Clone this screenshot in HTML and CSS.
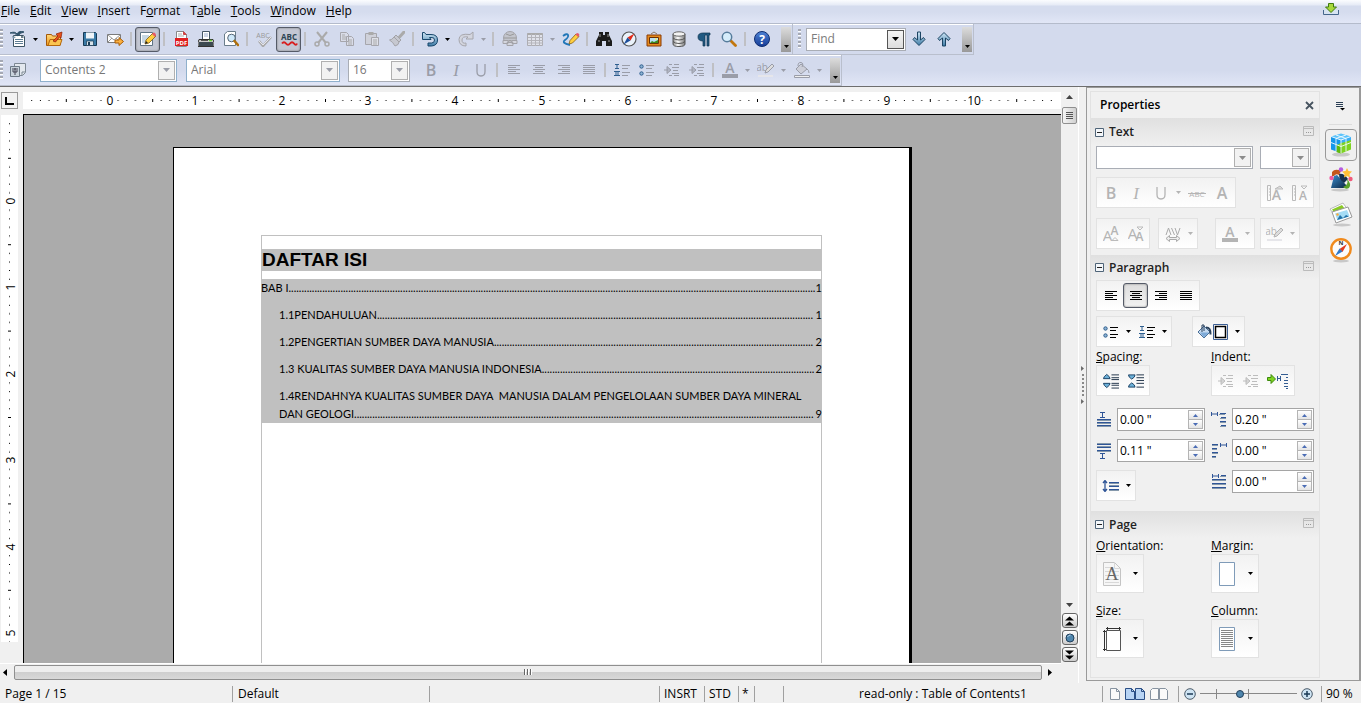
FILE: index.html
```html
<!DOCTYPE html>
<html lang="en">
<head>
<meta charset="utf-8">
<title>Document - Writer</title>
<link rel="stylesheet" href="styles.css">
<script src="leaders.js" defer></script>
</head>
<body>
<svg class="defs" aria-hidden="true">
  <defs>
    <linearGradient id="blue" x1="0" y1="0" x2="0" y2="1"><stop offset="0" stop-color="#cfe6f5"/><stop offset="1" stop-color="#3d7ba6"/></linearGradient>
    <linearGradient id="help" x1="0" y1="0" x2="0" y2="1"><stop offset="0" stop-color="#4f83d6"/><stop offset="1" stop-color="#153b95"/></linearGradient>
    <linearGradient id="folder" x1="0" y1="0" x2="0" y2="1"><stop offset="0" stop-color="#ffd97a"/><stop offset="1" stop-color="#f0991c"/></linearGradient>
    <linearGradient id="cyl" x1="0" y1="0" x2="1" y2="0"><stop offset="0" stop-color="#888"/><stop offset=".4" stop-color="#fff"/><stop offset="1" stop-color="#777"/></linearGradient>
    <linearGradient id="swirl" x1="0" y1="0" x2="1" y2="1"><stop offset="0" stop-color="#3a8fd0"/><stop offset="1" stop-color="#0c2340"/></linearGradient>
    <pattern id="inch-h" patternUnits="userSpaceOnUse" x="86.5" y="0" width="86.4" height="17">
      <path d="M8.6 8v1M17.3 8v1M25.9 8v1M34.6 8v1M43.2 7v3M51.8 8v1M60.5 8v1M69.1 8v1M77.8 8v1" stroke="#000"/>
    </pattern>
    <pattern id="inch-v" patternUnits="userSpaceOnUse" x="0" y="86.5" width="17" height="86.4">
      <path d="M8 8.6h1M8 17.3h1M8 25.9h1M8 34.6h1M7 43.2h3M8 51.8h1M8 60.5h1M8 69.1h1M8 77.8h1" stroke="#000"/>
    </pattern>
  </defs>
</svg>
<svg class="symbols" aria-hidden="true">
  <symbol id="drop" viewBox="0 0 5 3"><path d="M0 0h5L2.500 3z" fill="currentColor"/></symbol>
  <symbol id="new" viewBox="0 0 16 16"><path d="M3.500 4.500h10l1 1v10h-11z" fill="#fff" stroke="#3d5464"/><path d="M5 8.500h8M5 10.500h8M5 12.500h8" stroke="#5e7d93"/><path d="M0 2q5-2 7 1 2-4 7-2-4 .5-6 4-3-4-8-3z" fill="#31536b" stroke="#31536b"/><path d="M2 5l4 1-3 2z" fill="#7b95a8"/><path d="M11 6h2.500" stroke="#3d5464" stroke-width="1.500"/></symbol>
  <symbol id="open" viewBox="0 0 18 16"><path d="M1.500 14.500v-11h5l1 1.500h8v9z" fill="url(#folder)" stroke="#a4590a"/><path d="M3 14.500l2-6h12l-2 6z" fill="#fbc44f" stroke="#b4680c"/><path d="M8 10l5-5-2-2 6-2-1 6-1.500-1-4 5z" fill="#e8501a" stroke="#8a1f05" stroke-width=".7"/></symbol>
  <symbol id="save" viewBox="0 0 16 16"><path d="M1.500 1.500h12l1 1v12h-13z" fill="#3a7aa6" stroke="#173a55"/><path d="M4 1.500h8v6H4z" fill="#eef4f8"/><path d="M4.500 10h7v4.500h-7z" fill="#d8e3ea" stroke="#173a55" stroke-width=".7"/><path d="M6 11h2v3H6z" fill="#173a55"/></symbol>
  <symbol id="mail" viewBox="0 0 18 16"><path d="M1.500 3.500h13v8h-13z" fill="#fff" stroke="#7b7b7b"/><path d="M2 4l6 5 6-5M2 11l4-4M14 11l-4-4" fill="none" stroke="#999"/><path d="M9 9h4V6.500l4.500 4-4.500 4V12H9z" fill="#fbb040" stroke="#a65c08"/></symbol>
  <symbol id="edit" viewBox="0 0 18 16"><path d="M1.500 1.500h12v13h-12z" fill="#fff" stroke="#5f7485"/><path d="M3 5h7M3 7h6M3 9h4M3 11h3" stroke="#8fb0c8"/><path d="M6 13l1-4 7-7 3 3-7 7z" fill="#ffcf3f" stroke="#7a5a10" stroke-width=".8"/><path d="M13 3l1.500-1.500q2-.5 2.500 2.500L16 6z" fill="#e55a68"/><path d="M6 13l1-3 2 2z" fill="#222"/></symbol>
  <symbol id="pdf" viewBox="0 0 16 16"><path d="M3.500.5h7l3 3v12h-10z" fill="#fff" stroke="#888"/><path d="M10.500.5v3h3" fill="#e33" stroke="#a11" stroke-width=".6"/><path d="M5 3h4M5 5h6" stroke="#aaa"/><path d="M2 7h13v8H2z" fill="#e02020"/><text x="8.500" y="13.500" font-size="6" font-weight="700" fill="#fff" text-anchor="middle">PDF</text></symbol>
  <symbol id="print" viewBox="0 0 16 16"><path d="M4.500 8V.5h7V8" fill="#fff" stroke="#456"/><path d="M6 3h4M6 5h4" stroke="#9ac"/><path d="M1 8.500h14l1 3v4H0v-4z" fill="#ccc" stroke="#333"/><path d="M1 11h14v4H1z" fill="#3c4a52"/><path d="M3 9.500h7" stroke="#555"/><path d="M11 9.500h3" stroke="#6c3" stroke-width="1.500"/></symbol>
  <symbol id="preview" viewBox="0 0 16 16"><path d="M1.500 3l3-2.500h8v14h-11z" fill="#fff" stroke="#6a7d8b"/><circle cx="8.500" cy="7" r="3.800" fill="#cfe9fa" stroke="#567"/><path d="M11.500 10l3.500 4" stroke="#b0700c" stroke-width="2.500" stroke-linecap="round"/></symbol>
  <symbol id="spell" viewBox="0 0 18 16"><text x="8" y="7" font-size="7" text-anchor="middle" fill="#999">ABC</text><path d="M4 10l4 5 8-9" fill="none" stroke="#aaa" stroke-width="2.500"/><path d="M4 10l4 4 8-8" fill="none" stroke="#e4e4ea" stroke-width="1"/></symbol>
  <symbol id="autospell" viewBox="0 0 18 16"><text x="9" y="8.500" font-size="8" font-weight="700" text-anchor="middle" fill="#2d4452">ABC</text><path d="M2 12.500q2-2.500 4 0t4 0 4 0 3 0" fill="none" stroke="#d81e1e" stroke-width="2"/></symbol>
  <symbol id="cut" viewBox="0 0 16 16"><path d="M3 1l9 11M13 1L4 12" stroke="#aaa" stroke-width="2"/><circle cx="3" cy="13" r="2" fill="none" stroke="#aaa" stroke-width="1.500"/><circle cx="13" cy="13" r="2" fill="none" stroke="#aaa" stroke-width="1.500"/></symbol>
  <symbol id="copy" viewBox="0 0 16 16"><path d="M1.500 1.500h6l2 2v7h-8zM7.500 5.500h5l2 2v7h-7z" fill="#d9dce8" stroke="#a6a6ac"/><path d="M3 4h3M3 6h4M3 8h4M9 9h4M9 11h4M9 13h4" stroke="#aaa"/></symbol>
  <symbol id="paste" viewBox="0 0 16 16"><path d="M1.500 2.500h11v11h-11z" fill="#cfd1da" stroke="#a6a6ac"/><path d="M4.500 1h5v3h-5z" fill="#aaa"/><path d="M7.500 6.500h7v8h-7z" fill="#dee0e8" stroke="#a6a6ac"/><path d="M9 9h4M9 11h4M9 13h4" stroke="#aaa"/></symbol>
  <symbol id="brush" viewBox="0 0 16 16"><path d="M15 1l-4.500 5" stroke="#aaa" stroke-width="3" stroke-linecap="round"/><path d="M7 4l5 5-2 2-5-5zM5 6q-2 3-4.500 3Q4 11 6 15q4-1 4-4z" fill="#c6c8d0" stroke="#a3a3a8"/></symbol>
  <symbol id="undo" viewBox="0 0 16 16"><path d="M.5 1.500h2l1.500 2h5q6.500 0 6.500 5.500t-6 6H6v-3h3.500q3 0 3-3t-3.500-2.500H7.500L9 8.500H.5z" fill="url(#blue)" stroke="#17466b"/></symbol>
  <symbol id="redo" viewBox="0 0 16 16"><path d="M15 1v7H8l2-2q-6-1-6 3t4 3v3Q1 15 1 8.500t11-5z" fill="#d3d5de" stroke="#a6a6ac"/></symbol>
  <symbol id="globe" viewBox="0 0 16 16"><circle cx="8" cy="7" r="6.500" fill="#c3c5cd" stroke="#a3a3a8"/><path d="M2 7h12M4 3q4 3 8 0M4 11q4-3 8 0" stroke="#999" fill="none"/><path d="M1 9.500h5v3H1zM10 9.500h5v3h-5zM5 11.500h6v3H5z" fill="#d4d6de" stroke="#a3a3a8"/></symbol>
  <symbol id="table" viewBox="0 0 16 16"><path d="M.5 2.500h15v12H.5z" fill="#e0e2ea" stroke="#adadb2"/><path d="M.5 3h15" stroke="#aaa" stroke-width="2"/><path d="M1 6.500h15M1 9.500h15M1 12h15M4.500 3v12M8.500 3v12M12.500 3v12" stroke="#b4b4ba"/></symbol>
  <symbol id="draw" viewBox="0 0 18 16"><path d="M1 5q4-3 5-1t-3 5 5 5" fill="none" stroke="#2277b8" stroke-width="1.800"/><path d="M7 13l1-3.500L14 3l3 2.500-6.500 6.500z" fill="#ffcf3f" stroke="#875d10" stroke-width=".8"/><path d="M13.500 3.500L15 2q2 0 2.500 2L16 6z" fill="#e55a68"/></symbol>
  <symbol id="find" viewBox="0 0 16 16"><path d="M3 1h4v3h2V1h4v3l3 6v5h-6v-5H6v5H0v-5l3-6z" fill="#1c1c1c"/><path d="M2 10h2M12 10h2M4 3v3M12 3v3" stroke="#999"/></symbol>
  <symbol id="nav" viewBox="0 0 16 16"><circle cx="8" cy="8" r="7" fill="#eaf2fa" stroke="#555" stroke-width="1.200"/><path d="M13.500 2.500L9.500 9.500 6.500 6.500z" fill="#e02a1a"/><path d="M2.500 13.500l4-7 3 3z" fill="#1f4f9a"/></symbol>
  <symbol id="gallery" viewBox="0 0 16 16"><path d="M5 3l3-2 3 2" fill="none" stroke="#876"/><path d="M1 4h14v11H1z" fill="#e58a1c" stroke="#8a3b05"/><path d="M3.500 6.500h9v6h-9z" fill="#b8e0f4" stroke="#6a3005"/><path d="M4 12l2-2 2 1 4-2v3z" fill="#3c8a1e"/><circle cx="10" cy="8" r="1" fill="#fe6"/></symbol>
  <symbol id="data" viewBox="0 0 16 16"><path d="M2 3v10q0 2.500 6 2.500t6-2.500V3z" fill="url(#cyl)" stroke="#555"/><ellipse cx="8" cy="3" rx="6" ry="2.200" fill="#f3f3f3" stroke="#666"/><path d="M2 7q2 2 6 2t6-2M2 10.500q2 2 6 2t6-2" fill="none" stroke="#555"/></symbol>
  <symbol id="pilcrow" viewBox="0 0 16 16"><path d="M14 2H7Q2 2 2 6t5 4v5h2V4h2v11h2V4h1z" fill="#215a82" stroke="#0f3350" stroke-width=".7"/></symbol>
  <symbol id="zoom" viewBox="0 0 16 16"><path d="M9.500 9.500l5 5" stroke="#c2770e" stroke-width="2.800" stroke-linecap="round"/><circle cx="6" cy="6" r="4.700" fill="#d6edfb" stroke="#567c9c" stroke-width="1.500"/></symbol>
  <symbol id="helpi" viewBox="0 0 16 16"><circle cx="8" cy="8" r="7.500" fill="url(#help)" stroke="#0f2d70"/><text x="8" y="12.500" font-size="12" font-weight="700" fill="#fff" text-anchor="middle">?</text></symbol>
  <symbol id="down" viewBox="0 0 14 16"><path d="M5.500 1h3v8l3-2.500 1.500 2L7 14.500 1 8.500l1.500-2 3 2.500z" fill="url(#blue)" stroke="#1b4463"/></symbol>
  <symbol id="up" viewBox="0 0 14 16"><path d="M5.500 15h3V7l3 2.500 1.500-2L7 1.500 1 7.500l1.500 2 3-2.500z" fill="url(#blue)" stroke="#1b4463"/></symbol>
  <symbol id="styles" viewBox="0 0 16 16"><path d="M4.500 1.500h11v9l-3 3h-8z" fill="#e3e8ee" stroke="#7d8893"/><path d="M15 10h-3v3" fill="none" stroke="#7d8893"/><path d="M.5 4.500h9v10h-9z" fill="#c9d3dc" stroke="#6d7a87"/><path d="M2 7h6M5 6v7M3 8v2h4V8" fill="none" stroke="#445"/></symbol>
  <symbol id="b" viewBox="0 0 16 16"><text class="glyph" x="8" y="14" font-size="16" font-weight="600" text-anchor="middle">B</text></symbol>
  <symbol id="i" viewBox="0 0 16 16"><text class="serif" x="8" y="14" font-size="17" font-style="italic" text-anchor="middle">I</text></symbol>
  <symbol id="u" viewBox="0 0 16 16"><path d="M4 2v7.500Q4 14 8 14t4-4.500V2" fill="none" stroke="currentColor" stroke-width="1.300"/></symbol>
  <symbol id="a" viewBox="0 0 16 16"><text class="glyph" x="8" y="14" font-size="16" font-weight="600" text-anchor="middle">A</text></symbol>
  <symbol id="strike" viewBox="0 0 18 16"><text class="glyph" x="9" y="11.500" font-size="8" text-anchor="middle">ABC</text><path d="M0 8.500h18" stroke="currentColor"/></symbol>
  <symbol id="al" viewBox="0 0 14 12"><path d="M1 1.500h12M1 3.500h8M1 5.500h12M1 7.500h8M1 9.500h12" stroke="currentColor"/></symbol>
  <symbol id="ac" viewBox="0 0 14 12"><path d="M1 1.500h12M3 3.500h8M1 5.500h12M3 7.500h8M1 9.500h12" stroke="currentColor"/></symbol>
  <symbol id="ar" viewBox="0 0 14 12"><path d="M1 1.500h12M5 3.500h8M1 5.500h12M5 7.500h8M1 9.500h12" stroke="currentColor"/></symbol>
  <symbol id="aj" viewBox="0 0 14 12"><path d="M1 1.500h12M1 3.500h12M1 5.500h12M1 7.500h12M1 9.500h12" stroke="currentColor"/></symbol>
  <symbol id="numb" viewBox="0 0 16 14"><g class="mark" fill="none"><path d="M1 1.500h4M3 1v4M1 5.500h4M0 8.500h6M2 9v4M4 9v4M0 12.500h6"/></g><path d="M8 2.500h8M8 5.500h6M8 9.500h8M8 12.500h6" stroke="currentColor"/></symbol>
  <symbol id="bull" viewBox="0 0 16 14"><g class="mark bullet"><circle cx="2.500" cy="3.500" r="1.700"/><circle cx="2.500" cy="10.500" r="1.700"/></g><path d="M7 2.500h8M7 5.500h6M7 9.500h8M7 12.500h6" stroke="currentColor"/></symbol>
  <symbol id="ind" viewBox="0 0 16 14"><path d="M5 1.500h3M10 1.500h5M8 4.500h7M9 7.500h5M8 10.500h7M5 12.500h3M10 12.500h5" stroke="currentColor"/><path d="M0 7h4M3 3.500l4 3.500-4 3.500z" stroke="currentColor" fill="currentColor" fill-opacity=".6"/></symbol>
  <symbol id="fc" viewBox="0 0 16 16"><text class="glyph" x="8" y="10.500" font-size="14" font-weight="600" text-anchor="middle">A</text><path d="M0 12h16v4H0z" fill="currentColor"/></symbol>
  <symbol id="hl" viewBox="0 0 18 16"><text class="glyph" x="5" y="9" font-size="10" text-anchor="middle">ab</text><path d="M8 11l1-3 6-6 2 2-6 6z" fill="#ddd" stroke="currentColor"/><path d="M1 13h15v2H1z" fill="#e6e6ea"/></symbol>
  <symbol id="fill" viewBox="0 0 16 16"><path d="M2 7l5-5 6 5-6 5z" fill="#ccced8" stroke="currentColor"/><path d="M4 4q0-4 3-3.500T8 5M13 7q2 1 2 4" fill="none" stroke="currentColor"/><path d="M.5 13.500h15v2H.5z" fill="#eee" stroke="currentColor"/></symbol>
  <symbol id="minus" viewBox="0 0 9 9"><path d="M.5.5h8v8h-8z" fill="#f4f7fa" stroke="#4f6478"/><path d="M2 4.500h5" stroke="#222"/></symbol>
  <symbol id="more" viewBox="0 0 11 10"><path d="M.5.5h10v9H.5zM1 2.500h9" fill="none" stroke="#bbb"/><path d="M3 6.500h1M5 6.500h1M7 6.500h1" stroke="#999"/></symbol>
  <symbol id="rulA" viewBox="0 0 16 16"><path d="M.5.5h3v15h-3zM2 4h2M2 7h2M2 10h2" fill="none" stroke="#bbb"/><text class="glyph" x="9.500" y="15" font-size="14" font-weight="600" text-anchor="middle">A</text><path d="M8 4l5-3 3 3z" fill="#ddd" stroke="#bbb"/></symbol>
  <symbol id="rulB" viewBox="0 0 16 16"><path d="M.5.5h3v15h-3zM2 4h2M2 7h2M2 10h2" fill="none" stroke="#bbb"/><text class="glyph" x="11" y="15" font-size="12" font-weight="600" text-anchor="middle">A</text><path d="M9 1h6l-3 3z" fill="none" stroke="#bbb"/></symbol>
  <symbol id="grow" viewBox="0 0 16 16"><text class="glyph" x="4.500" y="15" font-size="15" text-anchor="middle">A</text><text class="glyph" x="11.500" y="9" font-size="12" font-weight="600" text-anchor="middle">A</text><path d="M9 14.500h6l-3-3z" fill="none" stroke="#bbb"/></symbol>
  <symbol id="shrink" viewBox="0 0 16 16"><text class="glyph" x="4.500" y="13" font-size="15" text-anchor="middle">A</text><text class="glyph" x="11.500" y="15" font-size="12" font-weight="600" text-anchor="middle">A</text><path d="M9 1h6l-3 3z" fill="none" stroke="#bbb"/></symbol>
  <symbol id="space" viewBox="0 0 16 16"><path d="M1 9l2.500-7L6 9M6.500 2l3 7M10 2l2.500 7L15 2" fill="none" stroke="#aaa"/><path d="M1 12.500l3.500-3v2h7v-2l3.500 3-3.500 3v-2h-7v2z" fill="#eee" stroke="#aaa"/></symbol>
  <symbol id="bucket" viewBox="0 0 32 16"><path d="M1 8l6-6 6 6-6 6z" fill="#c5daf0" stroke="#4a6f96"/><path d="M3 8.500h9l-5 5z" fill="#7daad8"/><path d="M5 8V1h2v6" fill="none" stroke="#29415c"/><path d="M9 3.500q5 0 4.500 7" fill="none" stroke="#29415c" stroke-width="2"/><path d="M16.500.5h14v15h-14z" fill="#fff" stroke="#3b5e94"/><path d="M18.500 2.500h10v11h-10z" fill="#fff" stroke="#000" stroke-width="1.500"/></symbol>
  <symbol id="spinc" viewBox="0 0 17 16"><path d="M.5 5.500q0-2 3.500-4.500 3.500 2.500 3.500 4.500zM.5 10.500q0 2 3.500 4.500 3.500-2.500 3.500-4.500z" fill="#6cb0d8" stroke="#173f63"/><path d="M9 1.500h8M9 4.500h8M9 6.500h8M9 10.500h8M9 12.500h8M9 15.500h8" stroke="#1c2f45"/></symbol>
  <symbol id="spdec" viewBox="0 0 17 16"><path d="M.5 1.500h7Q7.500 4 4 6 .5 4 .5 1.500zM.5 14.500h7Q7.500 12 4 10 .5 12 .5 14.500z" fill="#6cb0d8" stroke="#173f63"/><path d="M9 1.500h8M9 4.500h8M9 7.500h8M9 10.500h8M9 14.500h8" stroke="#1c2f45"/></symbol>
  <symbol id="hang" viewBox="0 0 22 16"><path d="M.5 4.500h3.500v-3l4.500 4.500L4 10.500v-3H.5z" fill="#7ed321" stroke="#3d8a0e"/><path d="M10.500 3v5M10.500 5.500h3M13.500 3v5M14 1.500h7" stroke="#345d92" fill="none"/><path d="M19 4.500h2M17 7.500h4M17 10.500h4M17 13.500h4M19 15.500h2" stroke="#345d92"/></symbol>
  <symbol id="above" viewBox="0 0 16 16"><path d="M4 .5h5M6.500 1v5M4 5.500h5" stroke="#2f5597" fill="none"/><path d="M1 7.500h14M1 10.500h14M1 13.500h14" stroke="#2f5597"/><path d="M1 8.500h14M1 11.500h14M1 14.500h14" stroke="#8598ab"/></symbol>
  <symbol id="below" viewBox="0 0 16 16"><path d="M4 10.500h5M6.500 11v4M4 15.500h5" stroke="#2f5597" fill="none"/><path d="M1 1.500h14M1 4.500h14M1 7.500h14" stroke="#2f5597"/><path d="M1 .5h14M1 3.500h14M1 8.500h14" stroke="#8598ab"/></symbol>
  <symbol id="inL" viewBox="0 0 16 16"><path d="M.5 0v4M1 2h5M6.500 0v4M9 1.500h6M10 5.500h5M9 9.500h6M10 13.500h5" stroke="#2f5597"/><path d="M8 2.500h6M9 6.500h6M9 10.500h6M9 14.500h6" stroke="#8598ab"/></symbol>
  <symbol id="inR" viewBox="0 0 16 16"><path d="M9.500 0v4M10 2h5M15.500 0v4M1 1.500h6M1 5.500h5M1 9.500h6M1 13.500h4" stroke="#2f5597"/><path d="M1 2.500h6M1 6.500h5M1 10.500h6M1 14.500h4" stroke="#8598ab"/></symbol>
  <symbol id="inF" viewBox="0 0 16 16"><path d="M1.500 0v4M2 2h5M7.500 0v4M10 1.500h5M1 5.500h14M1 9.500h14M1 13.500h14" stroke="#2f5597"/><path d="M9 2.500h6M1 6.500h14M1 10.500h14M1 14.500h14" stroke="#8598ab"/></symbol>
  <symbol id="lines" viewBox="0 0 18 12"><path d="M3 1v10M1 3l2-2.500L5 3M1 9l2 2.500L5 9" fill="none" stroke="#2f5597" stroke-width="1.300"/><path d="M7 2.500h10M7 6.500h10M7 9.500h10" stroke="#2f5597"/><path d="M7 3.500h10M7 5.500h10M7 10.500h10" stroke="#8598ab"/></symbol>
  <symbol id="orient" viewBox="0 0 18 24"><path d="M.5.500h11l6 6v17h-17z" fill="#f6f6f6" stroke="#c4c4c4"/><path d="M11.500.5v6h6M2 5.500h8M2 9.500h14M2 13.500h14M2 17.500h14M2 20.500h14" fill="none" stroke="#d8d8d8"/><text x="9" y="18" font-size="18" font-family="Liberation Serif, serif" text-anchor="middle" fill="#666">A</text></symbol>
  <symbol id="margin" viewBox="0 0 16 24"><path d="M.5.5h15v23H.5z" fill="#fff" stroke="#7f9bb8"/></symbol>
  <symbol id="size" viewBox="0 0 18 24"><path d="M3.500 3.500h14v20h-14z" fill="#fff" stroke="#555"/><path d="M4.500 0v3M16.500 0v3M3 1.500h15M0 4.500h3M0 22.500h3M1.500 3v21" stroke="#333"/></symbol>
  <symbol id="column" viewBox="0 0 16 24"><path d="M.5.5h15v23H.5z" fill="#fff" stroke="#7f9bb8"/><path d="M2 3.500h12M2 5.500h12M2 7.500h12M2 9.500h12M2 11.500h12M2 13.500h12M2 15.500h12M2 17.500h12M2 19.500h12" stroke="#888"/></symbol>
  <symbol id="cubes" viewBox="0 0 24 26"><ellipse cx="12" cy="22.500" rx="9" ry="2" fill="#c8c8c8"/><path d="M2 4.500L12 1.500 22 4.500 12 8z" fill="#5cc3fa"/><path d="M2 4.500L12 8v13L2 17.500z" fill="#1597ea"/><path d="M12 8l10-3.500v6l-10 4z" fill="#3aaef5"/><path d="M8 13l4-2 4-1 6-2v9.500L12 21.500l-4-1.500z" fill="#7ed321"/><path d="M7.500 13l4.500 2v6.500L7.500 20z" fill="#5fb90d"/><path d="M2 10.500l10 4M7 6.500v13M17 6.500v13M12 8v13.500M12 14.500l10-4M7 3l10 3.500M17 3L7 6.500M2 4.500L12 8l10-3.500" stroke="#f2faff" stroke-width=".9" fill="none"/></symbol>
  <symbol id="stylist" viewBox="0 0 24 26"><ellipse cx="11" cy="23" rx="9" ry="1.500" fill="#c8c8c8"/><path d="M3 9V5q3-4 9-1l-2 4q-3-2-5 1z" fill="#c4561c"/><path d="M5 9l3-1 10 11-3 2H2z" fill="url(#swirl)"/><path d="M10 7q5-1 9 5l-4 4q-5-3-5-9z" fill="#14304e"/><path d="M14 20q6-2 4-8 5 5 2 9-3 2-6-1z" fill="#5aa02c"/><path d="M18 1l1.500 3 3.500.5-2.500 2.500.5 3.500-3-1.500-3 1.500.5-3.500L13 4.500l3.500-.5z" fill="#ffc038"/><circle cx="12" cy="2.500" r="2.200" fill="#b65be0"/><circle cx="2.500" cy="11" r="2.200" fill="#f05aa0"/><circle cx="21.500" cy="12" r="2.200" fill="#f05a7a"/></symbol>
  <symbol id="pics" viewBox="0 0 24 26"><ellipse cx="13" cy="23" rx="9" ry="1.500" fill="#c8c8c8"/><path d="M1 7l13-6 8 11-13 6z" fill="#fff" stroke="#bbb"/><path d="M3 7.500l10-4.500 3 4-9 6z" fill="#8ac926"/><path d="M3 10l16-5 4 10-16 6z" fill="#fff" stroke="#999"/><path d="M6 11.500l12-3.500 2.500 6-12 4.500z" fill="#a5dcf5"/><path d="M8 18l3-5 3 3 3-3 3 1.500z" fill="#2372a8"/><circle cx="8.500" cy="12.500" r="1.200" fill="#fa3"/></symbol>
  <symbol id="compass" viewBox="0 0 24 26"><ellipse cx="12" cy="24" rx="8" ry="1.500" fill="#c8c8c8"/><circle cx="12" cy="12" r="9.700" fill="#fbfbfb" stroke="#f08a1c" stroke-width="2.400"/><text x="12" y="8" font-size="6" font-weight="700" text-anchor="middle" fill="#333">N</text><path d="M18 7l-4.500 8-3-3z" fill="#e23b1e"/><path d="M6 19l4.500-7.500 3 3z" fill="#2f78c8"/></symbol>
  <symbol id="menu" viewBox="0 0 9 9"><path d="M0 .5h7M0 2.500h7M0 4.500h7" stroke="#2b3f55"/><path d="M4 6h5L6.500 8.500z" fill="#000"/></symbol>
  <symbol id="update" viewBox="0 0 16 12"><path d="M.5 7v4.500h15V7" fill="#d7e4f2" stroke="#45678c" /><path d="M5.500.5h5v3.500h3L8 9.500 2.500 4h3z" fill="#a8d83c" stroke="#3f7a10"/></symbol>
  <symbol id="book1" viewBox="0 0 10 12"><path d="M.5.5h6l3 3v8h-9z" fill="#fafafa" stroke="#8793a0"/><path d="M6.500.5v3h3" fill="none" stroke="#8793a0"/></symbol>
  <symbol id="book2" viewBox="0 0 20 12"><path d="M.5.5h6l3 3v8h-9zM10.500.5h6l3 3v8h-9z" fill="#b8d4f4" stroke="#2b4f86"/><path d="M6.500.5v3h3M16.500.5v3h3" fill="none" stroke="#2b4f86"/></symbol>
  <symbol id="book3" viewBox="0 0 18 12"><path d="M.5 2.500l2-2h6v11h-8zM9.500.5h6l2 2v9h-8z" fill="#fafafa" stroke="#8793a0"/></symbol>
  <symbol id="zout" viewBox="0 0 12 12"><circle cx="6" cy="6" r="5.300" fill="#cfe4f3" stroke="#4a5b6a"/><path d="M3 6h6" stroke="#1b3a55" stroke-width="1.500"/></symbol>
  <symbol id="zin" viewBox="0 0 12 12"><circle cx="6" cy="6" r="5.300" fill="#cfe4f3" stroke="#4a5b6a"/><path d="M3 6h6M6 3v6" stroke="#1b3a55" stroke-width="1.500"/></symbol>
  <symbol id="ball" viewBox="0 0 10 10"><circle cx="5" cy="5" r="4" fill="#4f86ad" stroke="#23405c"/><path d="M2.500 4q1-2 3-2" fill="none" stroke="#b8d8ee"/></symbol>
  <symbol id="dblup" viewBox="0 0 9 10"><path d="M0 4.500L4.500.5 9 4.500zM0 9.500l4.500-4 4.500 4z" fill="#000"/></symbol>
  <symbol id="dbldn" viewBox="0 0 9 10"><path d="M0 .5h9l-4.500 4zM0 5.500h9l-4.500 4z" fill="#000"/></symbol>
  <symbol id="triu" viewBox="0 0 7 4"><path d="M0 4h7L3.500 0z" fill="currentColor"/></symbol>
  <symbol id="trid" viewBox="0 0 7 4"><path d="M0 0h7L3.500 4z" fill="currentColor"/></symbol>
  <symbol id="tril" viewBox="0 0 4 7"><path d="M4 0v7L0 3.500z" fill="currentColor"/></symbol>
  <symbol id="trir" viewBox="0 0 4 7"><path d="M0 0v7l4-3.500z" fill="currentColor"/></symbol>
</svg>

<header class="chrome">
  <nav class="menubar">
    <button><u>F</u>ile</button><button><u>E</u>dit</button><button><u>V</u>iew</button><button><u>I</u>nsert</button><button>F<u>o</u>rmat</button><button>T<u>a</u>ble</button><button><u>T</u>ools</button><button><u>W</u>indow</button><button><u>H</u>elp</button>
    <button class="update" aria-label="Update available"><svg width="16" height="12"><use href="#update"/></svg></button>
  </nav>

  <div class="toolrow">
    <div class="toolbar" role="toolbar" aria-label="Standard">
      <span class="grip"></span>
      <button class="tb" aria-label="New"><svg><use href="#new"/></svg></button><button class="dd" aria-label="New options"><svg><use href="#drop"/></svg></button>
      <button class="tb" aria-label="Open"><svg class="wide"><use href="#open"/></svg></button><button class="dd" aria-label="Open recent"><svg><use href="#drop"/></svg></button>
      <button class="tb" aria-label="Save"><svg><use href="#save"/></svg></button>
      <button class="tb" aria-label="Email"><svg class="wide"><use href="#mail"/></svg></button>
      <span class="sep"></span>
      <button class="tb on" aria-label="Edit file"><svg class="wide"><use href="#edit"/></svg></button>
      <span class="sep"></span>
      <button class="tb" aria-label="Export PDF"><svg><use href="#pdf"/></svg></button>
      <button class="tb" aria-label="Print"><svg><use href="#print"/></svg></button>
      <button class="tb" aria-label="Page preview"><svg><use href="#preview"/></svg></button>
      <span class="sep"></span>
      <button class="tb" aria-label="Spelling" disabled><svg class="wide"><use href="#spell"/></svg></button>
      <button class="tb on" aria-label="Auto spellcheck"><svg class="wide"><use href="#autospell"/></svg></button>
      <span class="sep"></span>
      <button class="tb" aria-label="Cut" disabled><svg><use href="#cut"/></svg></button>
      <button class="tb" aria-label="Copy" disabled><svg><use href="#copy"/></svg></button>
      <button class="tb" aria-label="Paste" disabled><svg><use href="#paste"/></svg></button>
      <button class="tb" aria-label="Format paintbrush" disabled><svg><use href="#brush"/></svg></button>
      <span class="sep"></span>
      <button class="tb" aria-label="Undo"><svg><use href="#undo"/></svg></button><button class="dd" aria-label="Undo list"><svg><use href="#drop"/></svg></button>
      <button class="tb" aria-label="Redo" disabled><svg><use href="#redo"/></svg></button><button class="dd" aria-label="Redo list" disabled><svg><use href="#drop"/></svg></button>
      <span class="sep"></span>
      <button class="tb" aria-label="Hyperlink" disabled><svg><use href="#globe"/></svg></button>
      <button class="tb" aria-label="Table" disabled><svg><use href="#table"/></svg></button><button class="dd" aria-label="Table size" disabled><svg><use href="#drop"/></svg></button>
      <button class="tb" aria-label="Show draw functions"><svg class="wide"><use href="#draw"/></svg></button>
      <span class="sep"></span>
      <button class="tb" aria-label="Find and replace"><svg><use href="#find"/></svg></button>
      <button class="tb" aria-label="Navigator"><svg><use href="#nav"/></svg></button>
      <button class="tb" aria-label="Gallery"><svg><use href="#gallery"/></svg></button>
      <button class="tb" aria-label="Data sources"><svg><use href="#data"/></svg></button>
      <button class="tb" aria-label="Nonprinting characters"><svg><use href="#pilcrow"/></svg></button>
      <button class="tb" aria-label="Zoom"><svg><use href="#zoom"/></svg></button>
      <span class="sep"></span>
      <button class="tb" aria-label="Help"><svg><use href="#helpi"/></svg></button>
      <button class="more" aria-label="More standard tools"><svg><use href="#drop"/></svg></button>
    </div>
    <div class="toolbar" role="toolbar" aria-label="Find">
      <span class="grip"></span>
      <div class="combo find"><input type="text" placeholder="Find" aria-label="Find"><button class="arrow dark" aria-label="Find history"><svg><use href="#trid"/></svg></button></div>
      <button class="tb" aria-label="Find next"><svg><use href="#down"/></svg></button>
      <button class="tb" aria-label="Find previous"><svg><use href="#up"/></svg></button>
      <button class="more" aria-label="More find tools"><svg><use href="#drop"/></svg></button>
    </div>
  </div>

  <div class="toolrow">
    <div class="toolbar" role="toolbar" aria-label="Formatting">
      <span class="grip"></span>
      <button class="tb" aria-label="Styles and formatting"><svg><use href="#styles"/></svg></button>
      <div class="combo style off"><input type="text" value="Contents 2" aria-label="Apply style" disabled><button class="arrow" aria-label="Style list" disabled><svg><use href="#trid"/></svg></button></div>
      <div class="combo font off"><input type="text" value="Arial" aria-label="Font name" disabled><button class="arrow" aria-label="Font list" disabled><svg><use href="#trid"/></svg></button></div>
      <div class="combo fsize off"><input type="text" value="16" aria-label="Font size" disabled><button class="arrow" aria-label="Size list" disabled><svg><use href="#trid"/></svg></button></div>
      <button class="tb" aria-label="Bold" disabled><svg><use href="#b"/></svg></button>
      <button class="tb" aria-label="Italic" disabled><svg><use href="#i"/></svg></button>
      <button class="tb" aria-label="Underline" disabled><svg><use href="#u"/></svg></button>
      <span class="sep"></span>
      <button class="tb" aria-label="Align left" disabled><svg class="al"><use href="#al"/></svg></button>
      <button class="tb" aria-label="Centered" disabled><svg class="al"><use href="#ac"/></svg></button>
      <button class="tb" aria-label="Align right" disabled><svg class="al"><use href="#ar"/></svg></button>
      <button class="tb" aria-label="Justified" disabled><svg class="al"><use href="#aj"/></svg></button>
      <span class="sep"></span>
      <button class="tb" aria-label="Numbering" disabled><svg class="li"><use href="#numb"/></svg></button>
      <button class="tb" aria-label="Bullets" disabled><svg class="li"><use href="#bull"/></svg></button>
      <button class="tb" aria-label="Decrease indent" disabled><svg class="li"><use href="#ind"/></svg></button>
      <button class="tb" aria-label="Increase indent" disabled><svg class="li"><use href="#ind"/></svg></button>
      <span class="sep"></span>
      <button class="tb" aria-label="Font color" disabled><svg><use href="#fc"/></svg></button><button class="dd" aria-label="Font color list" disabled><svg><use href="#drop"/></svg></button>
      <button class="tb" aria-label="Highlighting" disabled><svg class="wide"><use href="#hl"/></svg></button><button class="dd" aria-label="Highlighting list" disabled><svg><use href="#drop"/></svg></button>
      <button class="tb" aria-label="Background color" disabled><svg><use href="#fill"/></svg></button><button class="dd" aria-label="Background list" disabled><svg><use href="#drop"/></svg></button>
      <button class="more" aria-label="More formatting tools"><svg><use href="#drop"/></svg></button>
    </div>
  </div>
</header>

<main class="workspace">
  <section class="editor">
    <div class="hruler">
      <button class="tabstop" aria-label="Tab stop type"></button>
      <svg class="ruler-h" role="img" aria-label="Horizontal ruler">
        <rect width="100%" height="17" fill="url(#inch-h)" shape-rendering="crispEdges"/>
        <text x="87" y="13">0</text><text x="172" y="13">1</text><text x="259" y="13">2</text><text x="345" y="13">3</text><text x="432" y="13">4</text><text x="519" y="13">5</text><text x="605" y="13">6</text><text x="691" y="13">7</text><text x="778" y="13">8</text><text x="864" y="13">9</text><text x="951" y="13">10</text>
      </svg>
    </div>
    <div class="docrow">
      <div class="vruler">
        <svg class="ruler-v" role="img" aria-label="Vertical ruler">
          <rect width="17" height="100%" fill="url(#inch-v)" shape-rendering="crispEdges"/>
          <g transform="rotate(-90)"><text x="-86" y="14">0</text><text x="-172" y="14">1</text><text x="-259" y="14">2</text><text x="-345" y="14">3</text><text x="-432" y="14">4</text><text x="-518" y="14">5</text></g>
        </svg>
      </div>
      <div class="canvas">
        <article class="sheet">
          <div class="textarea">
            <h1>DAFTAR ISI</h1>
            <div class="toc">
              <p><span>BAB I</span><span class="dots"></span><span>1</span></p>
              <p class="sub"><span>1.1PENDAHULUAN</span><span class="dots"></span><span>1</span></p>
              <p class="sub"><span>1.2PENGERTIAN SUMBER DAYA MANUSIA</span><span class="dots"></span><span>2</span></p>
              <p class="sub"><span>1.3 KUALITAS SUMBER DAYA MANUSIA INDONESIA</span><span class="dots"></span><span>2</span></p>
              <p class="sub full">1.4RENDAHNYA KUALITAS SUMBER DAYA&nbsp; MANUSIA DALAM PENGELOLAAN SUMBER DAYA MINERAL</p>
              <p class="sub last"><span>DAN GEOLOGI</span><span class="dots"></span><span>9</span></p>
            </div>
          </div>
        </article>
      </div>
    </div>
    <div class="hscroll">
      <button aria-label="Scroll left"><svg width="4" height="7"><use href="#tril"/></svg></button>
      <div class="hthumb"><i></i><i></i><i></i></div>
      <button aria-label="Scroll right"><svg width="4" height="7"><use href="#trir"/></svg></button>
    </div>
  </section>
  <div class="vscroll">
    <button aria-label="Scroll up"><svg width="7" height="4"><use href="#triu"/></svg></button>
    <div class="vthumb"><i></i><i></i><i></i><i></i></div>
    <div class="track"></div>
    <button aria-label="Scroll down"><svg width="7" height="4"><use href="#trid"/></svg></button>
    <button class="nv" aria-label="Previous page"><svg width="9" height="10"><use href="#dblup"/></svg></button>
    <button class="nv" aria-label="Navigation"><svg width="10" height="10"><use href="#ball"/></svg></button>
    <button class="nv" aria-label="Next page"><svg width="9" height="10"><use href="#dbldn"/></svg></button>
  </div>
  <button class="splitter" aria-label="Toggle sidebar"><svg width="3" height="5"><use href="#trir"/></svg><i></i><svg width="3" height="5"><use href="#trir"/></svg></button>
  <aside class="sidebar">
    <div class="deck">
      <div class="deckhead"><h2>Properties</h2><button aria-label="Close"><svg width="9" height="9" viewBox="0 0 9 9"><path d="M1 1l7 7M8 1L1 8" stroke="#46535f" stroke-width="1.800"/></svg></button></div>

      <section class="panel ptext">
        <div class="phead"><svg width="9" height="9"><use href="#minus"/></svg><h3>Text</h3><button aria-label="More text options"><svg width="11" height="10"><use href="#more"/></svg></button></div>
        <div class="split fonts">
          <div class="combo grow off"><input type="text" aria-label="Font" disabled><button class="arrow" aria-label="Fonts" disabled><svg><use href="#trid"/></svg></button></div>
          <div class="combo side off"><input type="text" aria-label="Size" disabled><button class="arrow" aria-label="Sizes" disabled><svg><use href="#trid"/></svg></button></div>
        </div>
        <div class="split">
          <div class="group dim"><button class="tb" aria-label="Bold" disabled><svg><use href="#b"/></svg></button><button class="tb" aria-label="Italic" disabled><svg><use href="#i"/></svg></button><button class="tb" aria-label="Underline" disabled><svg><use href="#u"/></svg></button><button class="dd" aria-label="Underline styles" disabled><svg><use href="#drop"/></svg></button><button class="tb" aria-label="Strikethrough" disabled><svg class="wide"><use href="#strike"/></svg></button><button class="tb" aria-label="Shadow" disabled><svg><use href="#a"/></svg></button></div>
          <div class="group dim side"><button class="tb" aria-label="Superscript" disabled><svg><use href="#rulA"/></svg></button><button class="tb" aria-label="Subscript" disabled><svg><use href="#rulB"/></svg></button></div>
        </div>
        <div class="split four">
          <div class="group dim"><button class="tb" aria-label="Increase font" disabled><svg><use href="#grow"/></svg></button><button class="tb" aria-label="Reduce font" disabled><svg><use href="#shrink"/></svg></button></div>
          <div class="group dim"><button class="tb" aria-label="Character spacing" disabled><svg><use href="#space"/></svg></button><button class="dd" aria-label="Spacing list" disabled><svg><use href="#drop"/></svg></button></div>
          <div class="group dim fcolor"><button class="tb" aria-label="Font color" disabled><svg><use href="#fc"/></svg></button><button class="dd" aria-label="Color list" disabled><svg><use href="#drop"/></svg></button></div>
          <div class="group dim side"><button class="tb" aria-label="Highlighting" disabled><svg class="wide"><use href="#hl"/></svg></button><button class="dd" aria-label="Highlight list" disabled><svg><use href="#drop"/></svg></button></div>
        </div>
      </section>

      <section class="panel ppara">
        <div class="phead"><svg width="9" height="9"><use href="#minus"/></svg><h3>Paragraph</h3><button aria-label="More paragraph options"><svg width="11" height="10"><use href="#more"/></svg></button></div>
        <div class="group"><button class="tb" aria-label="Align left"><svg class="al"><use href="#al"/></svg></button><button class="tb on" aria-label="Centered"><svg class="al"><use href="#ac"/></svg></button><button class="tb" aria-label="Align right"><svg class="al"><use href="#ar"/></svg></button><button class="tb" aria-label="Justified"><svg class="al"><use href="#aj"/></svg></button></div>
        <div class="split lists">
          <div class="group"><button class="tb" aria-label="Bullets"><svg class="li"><use href="#bull"/></svg></button><button class="dd" aria-label="Bullet styles"><svg><use href="#drop"/></svg></button><button class="tb" aria-label="Numbering"><svg class="li"><use href="#numb"/></svg></button><button class="dd" aria-label="Numbering styles"><svg><use href="#drop"/></svg></button></div>
          <div class="group"><button class="tb bk" aria-label="Paragraph background"><svg><use href="#bucket"/></svg></button><button class="dd" aria-label="Background colors"><svg><use href="#drop"/></svg></button></div>
        </div>
        <div class="cols">
          <div>
            <h4><u>S</u>pacing:</h4>
            <div class="group"><button class="tb" aria-label="Increase spacing"><svg><use href="#spinc"/></svg></button><button class="tb" aria-label="Decrease spacing"><svg><use href="#spdec"/></svg></button></div>
            <div class="field"><svg><use href="#above"/></svg><div class="spin"><input type="text" value='0.00 "' aria-label="Above paragraph spacing"><span><button aria-label="Increase"><svg><use href="#triu"/></svg></button><button aria-label="Decrease"><svg><use href="#trid"/></svg></button></span></div></div>
            <div class="field"><svg><use href="#below"/></svg><div class="spin"><input type="text" value='0.11 "' aria-label="Below paragraph spacing"><span><button aria-label="Increase"><svg><use href="#triu"/></svg></button><button aria-label="Decrease"><svg><use href="#trid"/></svg></button></span></div></div>
            <div class="group ls"><button class="tb" aria-label="Line spacing"><svg class="lines"><use href="#lines"/></svg></button><button class="dd" aria-label="Line spacing list"><svg><use href="#drop"/></svg></button></div>
          </div>
          <div>
            <h4><u>I</u>ndent:</h4>
            <div class="group"><button class="tb faint" aria-label="Increase indent" disabled><svg class="li"><use href="#ind"/></svg></button><button class="tb faint" aria-label="Decrease indent" disabled><svg class="li"><use href="#ind"/></svg></button><button class="tb hg" aria-label="Hanging indent"><svg><use href="#hang"/></svg></button></div>
            <div class="field"><svg><use href="#inL"/></svg><div class="spin"><input type="text" value='0.20 "' aria-label="Before text indent"><span><button aria-label="Increase"><svg><use href="#triu"/></svg></button><button aria-label="Decrease"><svg><use href="#trid"/></svg></button></span></div></div>
            <div class="field"><svg><use href="#inR"/></svg><div class="spin"><input type="text" value='0.00 "' aria-label="After text indent"><span><button aria-label="Increase"><svg><use href="#triu"/></svg></button><button aria-label="Decrease"><svg><use href="#trid"/></svg></button></span></div></div>
            <div class="field"><svg><use href="#inF"/></svg><div class="spin"><input type="text" value='0.00 "' aria-label="First line indent"><span><button aria-label="Increase"><svg><use href="#triu"/></svg></button><button aria-label="Decrease"><svg><use href="#trid"/></svg></button></span></div></div>
          </div>
        </div>
      </section>

      <section class="panel ppage">
        <div class="phead"><svg width="9" height="9"><use href="#minus"/></svg><h3>Page</h3><button aria-label="More page options"><svg width="11" height="10"><use href="#more"/></svg></button></div>
        <div class="cols">
          <div><h4><u>O</u>rientation:</h4><button class="big" aria-label="Orientation"><svg width="18" height="24"><use href="#orient"/></svg><svg width="5" height="3"><use href="#drop"/></svg></button></div>
          <div><h4><u>M</u>argin:</h4><button class="big" aria-label="Margin"><svg width="18" height="24"><use href="#margin"/></svg><svg width="5" height="3"><use href="#drop"/></svg></button></div>
          <div><h4><u>S</u>ize:</h4><button class="big" aria-label="Size"><svg width="18" height="24"><use href="#size"/></svg><svg width="5" height="3"><use href="#drop"/></svg></button></div>
          <div><h4><u>C</u>olumn:</h4><button class="big" aria-label="Column"><svg width="18" height="24"><use href="#column"/></svg><svg width="5" height="3"><use href="#drop"/></svg></button></div>
        </div>
      </section>
    </div>
    <nav class="tabs">
      <button class="cfg" aria-label="Sidebar settings"><svg width="9" height="9"><use href="#menu"/></svg></button>
      <button class="tab cur" aria-label="Properties"><svg><use href="#cubes"/></svg></button>
      <button class="tab" aria-label="Styles"><svg><use href="#stylist"/></svg></button>
      <button class="tab" aria-label="Gallery"><svg><use href="#pics"/></svg></button>
      <button class="tab" aria-label="Navigator"><svg><use href="#compass"/></svg></button>
    </nav>
  </aside>
</main>

<footer class="status">
  <span class="s-page">Page 1 / 15</span><span class="s-style">Default</span><span class="s-lang"></span><span class="s-ins">INSRT</span><span class="s-std">STD</span><span class="s-mod">*</span><span class="s-sig"></span><span class="s-info">read-only : Table of Contents1</span>
  <span class="s-view"><button aria-label="Single page"><svg width="10" height="12"><use href="#book1"/></svg></button><button aria-label="Multiple pages"><svg width="20" height="12"><use href="#book2"/></svg></button><button aria-label="Book mode"><svg width="18" height="12"><use href="#book3"/></svg></button></span>
  <span class="s-zoom"><button aria-label="Zoom out"><svg width="12" height="12"><use href="#zout"/></svg></button><input type="range" min="0" max="100" value="41" aria-label="Zoom"><button aria-label="Zoom in"><svg width="12" height="12"><use href="#zin"/></svg></button></span>
  <span class="s-pct">90 %</span>
</footer>
</body>
</html>
```
FILE: leaders.js
```js
// Fills each table-of-contents leader with as many dots as its width holds.
function fillLeaders() {
  document.querySelectorAll('.dots').forEach(function (leader) {
    leader.textContent = '';
    var room = leader.getBoundingClientRect().width;
    var probe = document.createElement('span');
    probe.textContent = '.'.repeat(100);
    leader.appendChild(probe);
    var pitch = probe.getBoundingClientRect().width / 100;
    leader.textContent = '.'.repeat(Math.max(0, Math.floor(room / pitch)));
  });
}
fillLeaders();
window.addEventListener('resize', fillLeaders);
```
FILE: styles.css
```css
* { box-sizing: border-box; }
body {
  margin: 0;
  height: 100vh;
  display: flex;
  flex-direction: column;
  overflow: hidden;
  background: #f0f0f0;
  color: #000;
  font: 12px/16px "Open Sans", "Noto Sans", sans-serif;
}
button, input { font: inherit; color: inherit; }
button { border: 0; padding: 0; margin: 0; background: none; display: flex; align-items: center; justify-content: center; flex: none; }
input { border: 0; outline: 0; margin: 0; padding: 0 4px; min-width: 0; background: none; }
svg { display: block; flex: none; }
h1, h2, h3, h4, p { margin: 0; font-weight: 400; font-size: 12px; }
.defs { position: absolute; width: 0; height: 0; }
.symbols { display: none; }
.glyph { fill: currentColor; }
.serif { fill: currentColor; font-family: "Liberation Serif", serif; }
.mark { stroke: #2f5f8f; }
.bullet { fill: #8fb4d4; }

/* menu and toolbars */
.chrome { flex: none; border-bottom: 1px solid #6e6e6e; background: #d3daed; }
.menubar {
  display: flex;
  height: 24px;
  padding-bottom: 2px;
  border-bottom: 1px solid #b4bbcb;
  background: linear-gradient(#fbfcfe 0, #e6ebf6 5px, #d5dcee 6px, #d5dcee 12px, #e1e6f6 23px);
}
.menubar button { padding: 0 5px; }
.menubar button:first-child { padding-left: 1px; }
.menubar .update { margin-left: auto; padding: 0 22px 4px 0; }
.toolrow { display: flex; height: 31px; }
.toolrow:last-child { background: linear-gradient(#d3daed 50%, #e1e6f6); }
.toolbar { display: flex; align-items: center; border: 1px solid #b9bfcd; border-width: 0 1px 1px 0; box-shadow: inset 0 1px #fff; padding-right: 1px; }
.grip { width: 3px; height: 20px; margin-right: 2px; background: repeating-linear-gradient(#a5a9b4 0 2px, #fff 2px 3px, transparent 3px 4px); }
.toolbar + .toolbar .grip { margin: 0 5px; }
.tb { width: 25px; height: 25px; }
.tb svg { width: 16px; height: 16px; }
.tb svg.wide { width: 18px; }
.tb svg.al { width: 14px; height: 12px; }
.tb svg.li { width: 16px; height: 14px; }
.tb svg.lines { width: 18px; height: 12px; }
.tb.on { border: 1px solid #555b68; border-radius: 3px; background: #c3c7d3; box-shadow: inset 0 0 2px #777; }
.dd { width: 11px; height: 25px; }
.dd svg, .more svg { width: 5px; height: 3px; }
.toolbar :disabled { color: #9a9da8; --mark: #a0a3ad; }
.toolbar .mark { stroke: #a0a3ad; }
.sep { width: 2px; height: 14px; margin: 0 3px; background: #bfc0c4; }
.more { width: 10px; height: 25px; margin-left: 7px; align-items: flex-end; padding-bottom: 4px; background: linear-gradient(#dcdcdc, #999); }
.toolrow:last-child .more { margin-left: 5px; }
.toolbar + .toolbar .more { margin-left: 6px; }
.combo { display: flex; height: 23px; border: 1px solid #a9adb5; background: #fff; padding: 1px; }
.combo input { flex: 1; width: 0; padding: 0 3px; }
.combo.off input { color: #777; }
.arrow { width: 17px; height: 19px; border: 1px solid #b0b0b0; background: #f2f2f2; color: #8c8c8c; }
.arrow.dark { border-color: #555; color: #000; background: linear-gradient(#f4f4f4, #ddd); }
.arrow svg { width: 7px; height: 4px; }
.find { width: 100px; }
.find input::placeholder { color: #7c7c7c; opacity: 1; }
.style { width: 137px; margin: 0 9px 0 10px; }
.font { width: 154px; margin-right: 8px; }
.fsize { width: 62px; margin-right: 8px; }
.style, .font { border-color: #8fb0cc; }

/* editor */
.workspace { flex: 1; display: flex; min-height: 0; }
.editor { flex: 1; min-width: 0; display: flex; flex-direction: column; }
.hruler { display: flex; gap: 5px; padding: 5px 0 5px 1px; }
.tabstop { width: 17px; height: 17px; border: 1px solid #9a9a9a; background: #f2f2f2; }
.tabstop::before { content: ""; width: 7px; height: 6px; border: solid #000; border-width: 0 0 2px 2px; }
.ruler-h { flex: 1; height: 17px; background: #fff; }
.ruler-h text, .ruler-v text { font-size: 12px; text-anchor: middle; stroke: #fff; stroke-width: 3px; paint-order: stroke; }
.docrow { flex: 1; min-height: 0; display: flex; }
.vruler { width: 23px; padding: 1px 5px 21px 1px; display: flex; }
.ruler-v { width: 17px; height: 100%; background: #fff; }
.canvas { flex: 1; border: solid #000; border-width: 1px 0 0 1px; background: #ababab; display: flex; justify-content: center; align-items: stretch; padding-top: 32px; overflow: hidden; }
.sheet { width: 739px; flex: none; border: solid #000; border-width: 1px 3px 0 1px; background: #fff; padding: 87px 87px 0; display: flex; }
.textarea { flex: 1; min-width: 0; border: 1px solid #c0c0c0; border-bottom: 0; padding-top: 13px; }
.textarea h1 { background: #c0c0c0; font: 700 19px/22px "Liberation Sans", Arial, sans-serif; }
.toc { margin: 8px -1px 0; background: #c0c0c0; font: 11px/18px Lato, Carlito, sans-serif; }
.toc p { display: flex; padding-bottom: 9px; font-size: 11px; white-space: nowrap; }
.toc .sub { padding-left: 18px; }
.toc .full, .toc .last { padding-bottom: 0; }
.dots { flex: 1; width: 0; }
.hscroll { height: 20px; display: flex; align-items: center; padding: 0 3px 3px; border-top: 1px solid #fff; }
.hscroll button { width: 11px; height: 16px; justify-content: flex-start; }
.hscroll button:last-child { width: 16px; justify-content: center; }
.hthumb { flex: 1; height: 15px; display: flex; align-items: center; justify-content: center; gap: 1px; border: 1px solid #8f8f8f; border-radius: 2px; background: linear-gradient(#eee 45%, #cfcfcf 50%, #d8d8d8); }
.hthumb i { width: 2px; height: 6px; background: #666; border-right: 1px solid #fff; }
.vscroll { width: 17px; display: flex; flex-direction: column; align-items: center; padding-bottom: 19px; color: #444; }
.vscroll > button { width: 16px; height: 20px; }
.vthumb { width: 15px; height: 17px; display: flex; flex-direction: column; align-items: center; justify-content: center; gap: 1px; border: 1px solid #8f8f8f; border-radius: 2px; background: linear-gradient(90deg, #f4f4f4, #d0d0d0); }
.vthumb i { width: 7px; height: 1px; background: #555; }
.track { flex: 1; }
.vscroll .nv { width: 16px; height: 15px; margin-bottom: 2px; border: 1px solid #666; border-radius: 3px; background: linear-gradient(#fff, #ccc); }
.vscroll > button:nth-of-type(2) { height: 16px; }
.splitter { width: 8px; flex-direction: column; gap: 3px; border: solid #fff; border-width: 0 0 0 1px; color: #666; }
.splitter i { width: 2px; height: 22px; background: repeating-linear-gradient(#888 0 2px, transparent 2px 4px); }

/* sidebar */
.sidebar { width: 275px; display: flex; border: solid #9a9a9a; border-width: 1px 2px 1px 1px; margin-bottom: 2px; background: #f0f0f0; }
.deck { flex: 1; margin: 3px 0 2px 3px; border: 1px solid #e2e2e2; }
.deckhead { height: 26px; display: flex; align-items: center; justify-content: space-between; padding: 0 5px 0 9px; }
.deckhead h2, .phead h3 { font-weight: 600; }
.panel { padding: 0 5px; }
.ptext { height: 137px; }
.ppara { height: 256px; }
.phead { display: flex; align-items: center; gap: 5px; height: 28px; margin: 0 -5px; padding: 0 5px 0 4px; background: linear-gradient(#e0e0e0, #f0f0f0); }
.ppara .phead { height: 25px; }
.ppage .phead { height: 27px; }
.phead h3 { flex: 1; color: #222; }
.phead button { padding-bottom: 3px; }
.split { display: flex; margin-bottom: 10px; }
.side { margin-left: auto; }
.fonts { margin-bottom: 8px; }
.fonts .grow { width: 157px; }
.fonts .side { width: 51px; margin-left: 7px; }
.split .group.side { margin-left: 24px; }
.split.four .group.side { margin-left: 5px; }
.four .group + .group { margin-left: 8px; }
.four .group.fcolor { margin-left: 17px; }
.group { display: flex; align-items: center; width: max-content; height: 31px; padding: 0 1px; border: 1px solid #e2e2e2; background: linear-gradient(#f2f2f2, #fff); }
.group.dim { color: #b4b4b4; }
.faint { color: #bdbdbd; }
.ppara > .group { margin-bottom: 5px; }
.lists { gap: 20px; margin-bottom: 2px; }
.bk { width: 38px; }
.tb.bk svg { width: 32px; }
.hg { width: 30px; }
.tb.hg svg { width: 22px; }
.group .on { background: linear-gradient(#ddd, #f2f2f2); }
.cols { display: grid; grid-template-columns: 115px 1fr; }
.cols h4 { height: 16px; }
.field { display: flex; align-items: center; gap: 5px; height: 23px; margin-bottom: 8px; }
.group + .field { margin-top: 12px; }
.field > svg { width: 16px; height: 16px; }
.spin { display: flex; flex: none; width: 88px; height: 23px; padding: 1px; border: 1px solid #a5a5a5; background: #fff; }
.cols > div:last-child .spin { width: 82px; }
.spin input { flex: 1; width: 0; padding: 0 1px; }
.spin span { display: flex; flex-direction: column; width: 15px; border: 1px solid #b4b4b4; color: #4a6cb5; }
.spin button { flex: 1; background: linear-gradient(#fff, #e4e4e4); }
.spin button + button { border-top: 1px solid #b4b4b4; }
.spin svg { width: 5px; height: 3px; }
.ls { margin-top: 6px; }
.ppage .cols { row-gap: 10px; }
.big { width: 48px; height: 39px; gap: 12px; border: 1px solid #e2e2e2; background: linear-gradient(#f2f2f2, #fff); }
.tabs { width: 39px; display: flex; flex-direction: column; align-items: center; padding: 0 0 0 2px; }
.cfg { width: 23px; height: 37px; margin-bottom: 4px; border-bottom: 1px solid #ddd; }
.tab { width: 32px; height: 32px; margin-bottom: 3px; border: 1px solid transparent; border-radius: 4px; }
.tab.cur { border-color: #999; }
.tab svg { width: 24px; height: 26px; }

/* status bar */
.status { flex: none; display: flex; align-items: center; height: 20px; padding-top: 1px; }
.status > span { height: 16px; padding-left: 5px; border-left: 1px solid #a0a0a0; flex: none; }
.status .s-page { width: 232px; border: 0; }
.s-style { width: 197px; }
.s-lang { width: 230px; }
.status .s-ins { width: 45px; padding-left: 4px; }
.status .s-std { width: 34px; padding-left: 4px; }
.status .s-mod { width: 16px; padding-left: 3px; }
.s-sig { width: 29px; }
.status .s-info { flex: 1; padding: 0; text-align: center; }
.status .s-view { width: 76px; display: flex; align-items: center; gap: 5px; padding-left: 7px; }
.status .s-zoom { width: 143px; display: flex; align-items: center; gap: 4px; padding-right: 8px; }
.s-zoom input { flex: 1; height: 10px; padding: 0; appearance: none; background: linear-gradient(#888, #888) 16px 0 / 1px 100% no-repeat, linear-gradient(#888, #888) 48px 0 / 1px 100% no-repeat, linear-gradient(#888, #888) 0 4px / 100% 1px no-repeat; }
.s-zoom input::-webkit-slider-thumb { appearance: none; width: 8px; height: 8px; border: 1px solid #23405c; border-radius: 50%; background: #4f86ad; }
.status .s-pct { width: 40px; padding-left: 4px; }
```
